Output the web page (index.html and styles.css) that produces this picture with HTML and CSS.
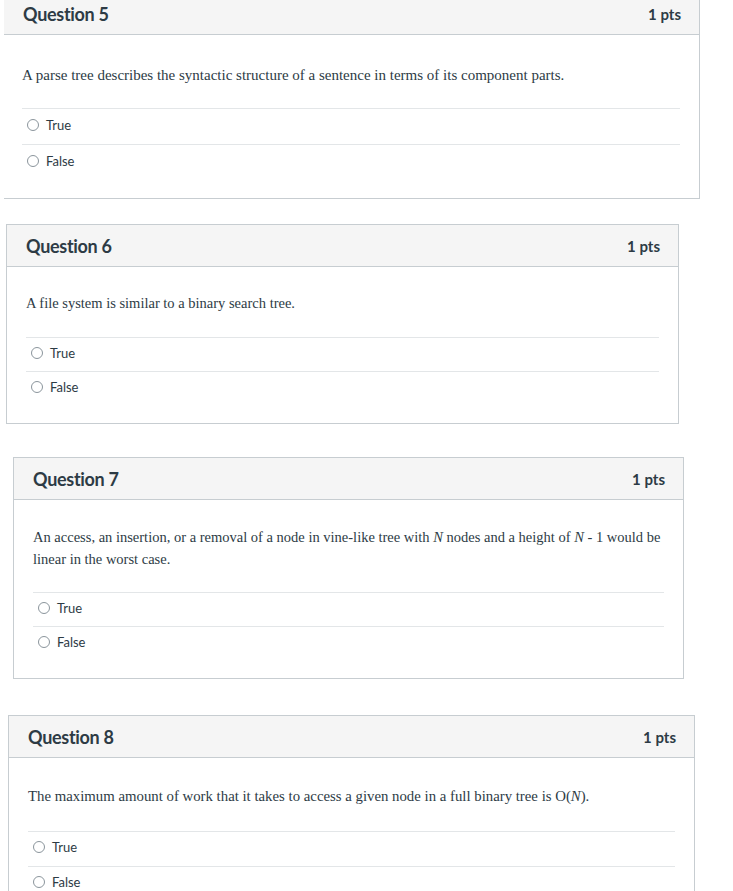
FILE: index.html
```html
<!DOCTYPE html>
<html lang="en">
<head>
<meta charset="utf-8">
<title>Quiz</title>
<link rel="stylesheet" href="styles.css">
</head>
<body>
<div class="card q5">
  <div class="card-header"><span class="title">Question 5</span><span class="pts">1 pts</span></div>
  <div class="card-body">
    <p class="question">A parse tree describes the syntactic structure of a sentence in terms of its component parts.</p>
    <div class="answers">
      <div class="answer"><span class="radio"></span>True</div>
      <div class="answer"><span class="radio"></span>False</div>
    </div>
  </div>
</div>
<div class="card q6">
  <div class="card-header"><span class="title">Question 6</span><span class="pts">1 pts</span></div>
  <div class="card-body">
    <p class="question">A file system is similar to a binary search tree.</p>
    <div class="answers">
      <div class="answer"><span class="radio"></span>True</div>
      <div class="answer"><span class="radio"></span>False</div>
    </div>
  </div>
</div>
<div class="card q7">
  <div class="card-header"><span class="title">Question 7</span><span class="pts">1 pts</span></div>
  <div class="card-body">
    <p class="question">An access, an insertion, or a removal of a node in vine-like tree with <i>N</i> nodes and a height of <i>N</i> - 1 would be linear in the worst case.</p>
    <div class="answers">
      <div class="answer"><span class="radio"></span>True</div>
      <div class="answer"><span class="radio"></span>False</div>
    </div>
  </div>
</div>
<div class="card q8">
  <div class="card-header"><span class="title">Question 8</span><span class="pts">1 pts</span></div>
  <div class="card-body">
    <p class="question">The maximum amount of work that it takes to access a given node in a full binary tree is O(<i>N</i>).</p>
    <div class="answers">
      <div class="answer"><span class="radio"></span>True</div>
      <div class="answer"><span class="radio"></span>False</div>
    </div>
  </div>
</div>
</body>
</html>
```
FILE: styles.css
```css
html, body {
  margin: 0;
  padding: 0;
  background: #ffffff;
}
body {
  color: #2d3b45;
  font-family: Lato, "Liberation Sans", sans-serif;
  overflow: hidden;
  height: 891px;
}
.card {
  box-sizing: border-box;
  border: 1px solid #c7cdd1;
  background: #ffffff;
}
.card-header {
  height: 41px;
  box-sizing: content-box;
  display: flex;
  align-items: center;
  justify-content: space-between;
  padding: 0 18px 0 19px;
  background: #f5f5f5;
  border-bottom: 1px solid #c7cdd1;
}
.title {
  font-size: 18px;
  font-weight: 700;
  letter-spacing: -0.3px;
  color: #2d3b45;
}
.pts {
  font-size: 15px;
  font-weight: 700;
  color: #2d3b45;
}
.card-body {
  padding: 25px 19px 18px 19px;
}
.question {
  margin: 0;
  font-family: "Liberation Serif", "Times New Roman", serif;
  font-size: 14.5px;
  line-height: 22px;
  color: #2d3b45;
}
.answers {
  margin-top: 23px;
}
.answer {
  box-sizing: border-box;
  height: 34px;
  padding-bottom: 4px;
  display: flex;
  align-items: center;
  border-top: 1px solid #e3e6e8;
  font-size: 13px;
  color: #2d3b45;
}
.radio {
  box-sizing: border-box;
  width: 12px;
  height: 12px;
  border: 1px solid #8b959c;
  border-radius: 50%;
  margin-left: 5px;
  margin-right: 7px;
  background: #ffffff;
}
.q5 {
  margin: -8px 0 0 4px;
  width: 696px;
  border-left: 0;
}
.q5 .card-body {
  padding: 29px 19px 18px 18px;
}
.q5 .question {
  font-size: 15px;
}
.q5 .answers {
  margin-top: 22px;
}
.q5 .answer {
  height: 36px;
}
.q6 {
  margin: 25px 0 0 6px;
  width: 673px;
}
.q7 {
  margin: 33px 0 0 13px;
  width: 671px;
}
.q7 .card-body {
  padding-top: 26px;
}
.q7 .answers {
  margin-top: 22px;
}
.q8 {
  margin: 36px 0 0 8px;
  width: 687px;
}
.q8 .card-body {
  padding-top: 27px;
}
.q8 .question {
  font-size: 14.8px;
}
.q8 .answers {
  margin-top: 24px;
}
.q8 .answer {
  height: 35px;
}
```
